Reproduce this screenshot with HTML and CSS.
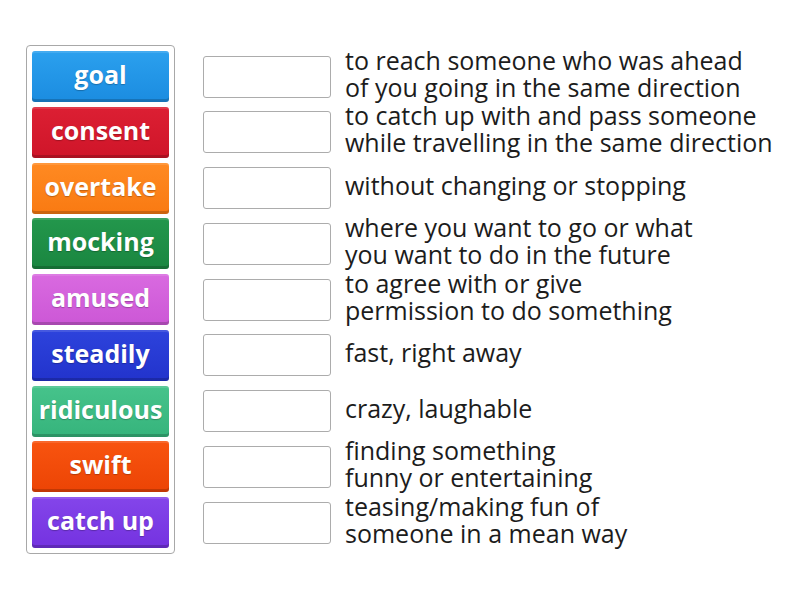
FILE: index.html
```html
<!DOCTYPE html>
<html lang="en">
  <head>
    <meta charset="UTF-8" />
    <meta name="viewport" content="width=device-width, initial-scale=1.0" />
    <title>Match up</title>
    <link rel="stylesheet" href="styles.css">
  </head>
  <body>
    <div id="game">
      <div id="words">
        <div class="tile blue">goal</div>
        <div class="tile red">consent</div>
        <div class="tile orange">overtake</div>
        <div class="tile green">mocking</div>
        <div class="tile pink">amused</div>
        <div class="tile navy">steadily</div>
        <div class="tile mint">ridiculous</div>
        <div class="tile flame">swift</div>
        <div class="tile violet">catch up</div>
      </div>

      <div id="answers">
        <div class="row">
          <div class="slot"></div>
          <div class="def">to reach someone who was ahead<br>of you going in the same direction</div>
        </div>
        <div class="row">
          <div class="slot"></div>
          <div class="def">to catch up with and pass someone<br>while travelling in the same direction</div>
        </div>
        <div class="row">
          <div class="slot"></div>
          <div class="def">without changing or stopping</div>
        </div>
        <div class="row">
          <div class="slot"></div>
          <div class="def">where you want to go or what<br>you want to do in the future</div>
        </div>
        <div class="row">
          <div class="slot"></div>
          <div class="def">to agree with or give<br>permission to do something</div>
        </div>
        <div class="row">
          <div class="slot"></div>
          <div class="def">fast, right away</div>
        </div>
        <div class="row">
          <div class="slot"></div>
          <div class="def">crazy, laughable</div>
        </div>
        <div class="row">
          <div class="slot"></div>
          <div class="def">finding something<br>funny or entertaining</div>
        </div>
        <div class="row">
          <div class="slot"></div>
          <div class="def">teasing/making fun of<br>someone in a mean way</div>
        </div>
      </div>
    </div>
  </body>
</html>
```

FILE: styles.css
```css
body {
  margin: 0;
  font-family: "Open Sans", "DejaVu Sans", sans-serif;
  background: #fff;
  color: #1c1c1c;
}
#game {
  display: flex;
  align-items: flex-start;
  padding: 45px 0 0 26px;
}
#words {
  display: flex;
  flex-direction: column;
  gap: 4.75px;
  padding: 5px;
  border: 1px solid #a8a8a8;
  border-radius: 4px;
}
.tile {
  width: 137px;
  height: 51px;
  box-sizing: border-box;
  border-radius: 3px;
  display: flex;
  align-items: center;
  justify-content: center;
  padding-bottom: 5px;
  color: #fff;
  font-weight: 700;
  font-size: 25px;
  text-shadow: 0 1px 1px rgba(0, 0, 0, 0.25);
  box-shadow: inset 0 -3px 0 rgba(0, 0, 0, 0.18), inset 0 2px 0 rgba(255, 255, 255, 0.12);
}
.blue { background: linear-gradient(#2ba0ee, #1b8ce0); }
.red { background: linear-gradient(#dc1f33, #cf1529); }
.orange { background: linear-gradient(#ff8a22, #f97a12); }
.green { background: linear-gradient(#23974c, #1a8640); }
.pink { background: linear-gradient(#d96ae0, #cc57d6); }
.navy { background: linear-gradient(#2d43dc, #2233cc); }
.mint { background: linear-gradient(#46c38b, #36b47c); }
.flame { background: linear-gradient(#f8540f, #ec4405); }
.violet { background: linear-gradient(#8445ea, #7432e0); }

#answers {
  display: flex;
  flex-direction: column;
  gap: 4.75px;
  padding-top: 6px;
  margin-left: 28px;
}
.row {
  height: 51px;
  display: flex;
  align-items: center;
}
.slot {
  width: 128px;
  height: 42px;
  box-sizing: border-box;
  border: 1px solid #acacac;
  border-radius: 3px;
  background: #fff;
  flex-shrink: 0;
}
.def {
  margin-left: 14px;
  margin-top: -6px;
  font-size: 25px;
  line-height: 27px;
  white-space: nowrap;
}
```
